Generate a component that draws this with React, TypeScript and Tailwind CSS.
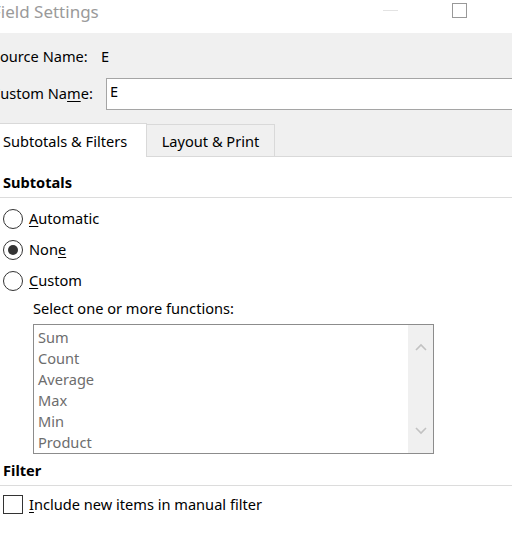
import React from "react";

const font = { fontFamily: '"Noto Sans", "Open Sans", sans-serif' };

function Radio({ checked, label, u }: { checked?: boolean; label: string; u: number }) {
  const before = label.slice(0, u);
  const ch = label.slice(u, u + 1);
  const after = label.slice(u + 1);
  return (
    <div className="flex items-center h-[31px]">
      <div className="ml-[3px] w-[20px] h-[20px] rounded-full border border-[#333] bg-white flex items-center justify-center">
        {checked && <div className="w-[10px] h-[10px] rounded-full bg-[#333]" />}
      </div>
      <span className="ml-[6px] text-[14.6px] text-black">
        {before}
        <span className="underline underline-offset-2">{ch}</span>
        {after}
      </span>
    </div>
  );
}

export default function App() {
  const items = ["Sum", "Count", "Average", "Max", "Min", "Product"];
  return (
    <div className="w-[512px] h-[542px] overflow-hidden bg-white" style={font}>
      {/* title bar */}
      <div className="h-[33px] bg-white flex items-start">
        <div className="-ml-[8px] mt-[0px] text-[17px] leading-[24px] text-[#9a9a9a] whitespace-nowrap">Field Settings</div>
        <div className="ml-auto flex items-start">
          <div className="mt-[10px] w-[15px] h-[1px] bg-[#e3e3e3]" />
          <div className="ml-[54px] mt-[3px] w-[15px] h-[15px] border border-[#999]" />
          <div className="w-[45px]" />
        </div>
      </div>
      {/* gray area */}
      <div className="bg-[#f0f0f0] h-[124px] flex flex-col">
        <div className="h-[45px] flex items-center pt-[3px] text-[14.6px] text-black whitespace-nowrap">
          <span className="-ml-[8px] w-[109px]">Source Name:</span>
          <span>E</span>
        </div>
        <div className="flex items-center h-[32px]">
          <span className="-ml-[9px] w-[115px] text-[14.6px] text-black whitespace-nowrap">
            Custom Na<span className="underline underline-offset-2">m</span>e:
          </span>
          <div className="flex-1 h-[32px] -mr-[20px] bg-white border border-[#a5a5a5] flex items-start pl-[3px] pt-[2px] text-[14.6px] text-black">
            E
          </div>
        </div>
        <div className="mt-auto flex items-end h-[34px] border-b border-[#d9d9d9]">
          <div className="w-[147px] h-[34px] -mb-[1px] bg-white border-r border-t border-[#d9d9d9] flex items-center pl-[3px] pt-[2px] text-[14.6px] text-black">
            Subtotals &amp; Filters
          </div>
          <div className="w-[128px] h-[32px] bg-[#f0f0f0] border-r border-t border-[#d9d9d9] flex items-center justify-center text-[14.6px] text-black pt-[3px]">
            Layout &amp; Print
          </div>
        </div>
      </div>
      {/* content */}
      <div className="bg-white">
        <div className="h-[41px] border-b border-[#dcdcdc] flex items-end pl-[3px] pb-[5px] text-[14.6px] leading-[20px] font-bold text-black">
          Subtotals
        </div>
        <div className="pt-[5px]">
          <Radio label="Automatic" u={0} />
          <Radio label="None" u={3} checked />
          <Radio label="Custom" u={0} />
        </div>
        <div className="ml-[33px] mt-[3px] h-[20px] flex items-center text-[14.6px] text-black">
          Select one or more functions:
        </div>
        <div className="ml-[33px] mt-[5px] w-[401px] h-[130px] border border-[#8c8c8c] flex">
          <div className="flex-1 pl-[4px] pt-[2px]">
            {items.map((it) => (
              <div key={it} className="h-[21px] leading-[21px] text-[14.6px] text-[#6d6d6d]">
                {it}
              </div>
            ))}
          </div>
          <div className="w-[25px] bg-[#f0f0f0] flex flex-col items-center justify-between py-[18px]">
            <svg width="12" height="8" viewBox="0 0 12 8">
              <path d="M1 7 L6 2 L11 7" fill="none" stroke="#c2c2c2" strokeWidth="1.6" />
            </svg>
            <svg width="12" height="8" viewBox="0 0 12 8">
              <path d="M1 1 L6 6 L11 1" fill="none" stroke="#c2c2c2" strokeWidth="1.6" />
            </svg>
          </div>
        </div>
        <div className="h-[32px] border-b border-[#dcdcdc] flex items-end pl-[3px] pb-[5px] text-[14.6px] leading-[20px] font-bold text-black">
          Filter
        </div>
        <div className="flex items-center mt-[8px]">
          <div className="ml-[3px] w-[20px] h-[19px] border border-[#333] bg-white" />
          <span className="ml-[6px] text-[14.6px] text-black">
            <span className="underline underline-offset-2">I</span>nclude new items in manual filter
          </span>
        </div>
      </div>
    </div>
  );
}
